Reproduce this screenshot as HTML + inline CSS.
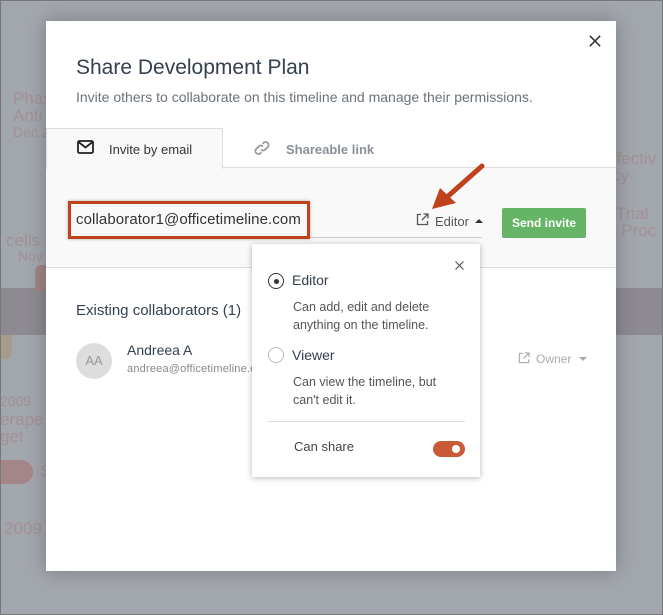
<!DOCTYPE html>
<html><head><style>
*{box-sizing:border-box;margin:0;padding:0}
body{width:663px;height:615px;position:relative;overflow:hidden;background:#a2a6ad;font-family:"Liberation Sans",sans-serif}
.a{position:absolute}
.bg{color:#a39194;font-size:17px;line-height:17px}
</style></head><body>
<div class="a" style="left:0;top:288px;width:663px;height:47px;background:#8d8a91"></div>
<div class="a" style="left:35px;top:265px;width:12px;height:26px;background:#a08487;border-radius:6px 0 0 0"></div>
<div class="a" style="left:0;top:335px;width:12px;height:24px;background:#a59c8d;border-radius:0 0 6px 0"></div>
<div class="a" style="left:0;top:460px;width:33px;height:24px;background:#a58688;border-radius:0 12px 12px 0"></div>
<div class="a bg" style="left:13px;top:90px">Phas<br>Anti</div>
<div class="a bg" style="left:13px;top:124px;font-size:14px">Dec 2</div>
<div class="a bg" style="left:6px;top:232px">cells</div>
<div class="a bg" style="left:18px;top:248px;font-size:14px">Nov</div>
<div class="a bg" style="left:0;top:393px;font-size:14px">2009</div>
<div class="a bg" style="left:0;top:411px">erape<br>get</div>
<div class="a bg" style="left:40px;top:462px">S</div>
<div class="a bg" style="left:4px;top:520px">2009</div>
<div class="a bg" style="left:612px;top:150px">ffectiv<br>cy</div>
<div class="a bg" style="left:616px;top:205px">Trial<br><span style="margin-left:-8px">y Proc</span></div>

<div class="a" style="left:46px;top:21px;width:570px;height:550px;background:#fff;box-shadow:0 0 18px rgba(0,0,0,.25)">
  <div class="a" style="left:30px;top:35px;font-size:21px;color:#344050">Share Development Plan</div>
  <div class="a" style="left:30px;top:68px;font-size:14px;color:#6b727b">Invite others to collaborate on this timeline and manage their permissions.</div>
  <svg class="a" style="left:543px;top:14px" width="12" height="12" viewBox="0 0 14 14"><path d="M1 1L13 13M13 1L1 13" stroke="#333" stroke-width="1.8"/></svg>
  <div class="a" style="left:0;top:146px;width:570px;height:101px;background:#f9f9f9;border-top:1px solid #ddd;border-bottom:1px solid #ddd"></div>
  <div class="a" style="left:0;top:107px;width:177px;height:41px;background:#f9f9f9;border:1px solid #ddd;border-bottom:none"></div>
  <svg class="a" style="left:31px;top:119px" width="17" height="14" viewBox="0 0 17 14"><rect x="1" y="1" width="15" height="12" rx="1.5" fill="none" stroke="#222" stroke-width="1.8"/><path d="M1.5 2L8.5 7.5L15.5 2" fill="none" stroke="#222" stroke-width="1.8"/></svg>
  <div class="a" style="left:63px;top:121px;font-size:13px;color:#333">Invite by email</div>
  <svg class="a" style="left:207px;top:118px" width="18" height="18" viewBox="0 0 18 18"><path d="M8 10.5a3 3 0 0 0 4 .3l3-3a3 3 0 0 0-4.2-4.2l-1.2 1.2M10 7.5a3 3 0 0 0-4-.3l-3 3a3 3 0 0 0 4.2 4.2l1.2-1.2" fill="none" stroke="#999" stroke-width="1.8"/></svg>
  <div class="a" style="left:240px;top:121px;font-size:13px;color:#8a9099;font-weight:bold">Shareable link</div>
  <div class="a" style="left:22px;top:216px;width:414px;height:1px;background:#ccc"></div>
  <div class="a" style="left:22px;top:180px;width:242px;height:38px;border:3px solid #c0421c;box-shadow:0 0 3px rgba(0,0,0,.3);background:#f9f9f9"></div>
  <div class="a" style="left:30px;top:190px;font-size:15px;color:#333;letter-spacing:.1px">collaborator1@officetimeline.com</div>
  <svg class="a" style="left:370px;top:192px" width="13" height="13" viewBox="0 0 13 13"><path d="M5 1.5H1.5v10h10V8M7.5 1h4.5v4.5M12 1L6 7" fill="none" stroke="#555" stroke-width="1.3"/></svg>
  <div class="a" style="left:389px;top:193px;font-size:13px;color:#555">Editor</div>
  <div class="a" style="left:429px;top:198px;width:0;height:0;border-left:4px solid transparent;border-right:4px solid transparent;border-bottom:4px solid #333"></div>
  <svg class="a" style="left:380px;top:142px" width="60" height="50" viewBox="0 0 60 50"><path d="M56 3L20 35" stroke="#c0421c" stroke-width="5" stroke-linecap="round"/><path d="M6 46L30 40L14 25Z" fill="#c0421c"/></svg>
  <div class="a" style="left:456px;top:187px;width:84px;height:30px;background:#66b466;border-radius:2px;color:#fff;font-size:12px;font-weight:bold;text-align:center;line-height:30px">Send invite</div>
  <div class="a" style="left:30px;top:281px;font-size:15px;color:#344050">Existing collaborators (1)</div>
  <div class="a" style="left:30px;top:322px;width:36px;height:36px;border-radius:50%;background:#ddd;color:#999;font-size:13px;text-align:center;line-height:36px">AA</div>
  <div class="a" style="left:81px;top:321px;font-size:14px;color:#344050">Andreea A</div>
  <div class="a" style="left:81px;top:342px;font-size:11px;color:#888;letter-spacing:.2px">andreea@officetimeline.com</div>
  <svg class="a" style="left:472px;top:331px" width="12" height="12" viewBox="0 0 13 13"><path d="M5 1.5H1.5v10h10V8M7.5 1h4.5v4.5M12 1L6 7" fill="none" stroke="#aaa" stroke-width="1.2"/></svg>
  <div class="a" style="left:490px;top:331px;font-size:12px;color:#aaa">Owner</div>
  <div class="a" style="left:533px;top:336px;width:0;height:0;border-left:4px solid transparent;border-right:4px solid transparent;border-top:4px solid #aaa"></div>
</div>

<div class="a" style="left:252px;top:244px;width:228px;height:233px;background:#fff;box-shadow:0 1px 6px rgba(0,0,0,.28)">
  <svg class="a" style="left:203px;top:17px" width="9" height="9" viewBox="0 0 9 9"><path d="M.5 .5L8.5 8.5M8.5 .5L.5 8.5" stroke="#555" stroke-width="1.2"/></svg>
  <div class="a" style="left:16px;top:29px;width:16px;height:16px;border:1.5px solid #333;border-radius:50%"></div>
  <div class="a" style="left:21.5px;top:34.5px;width:5px;height:5px;background:#333;border-radius:50%"></div>
  <div class="a" style="left:40px;top:28px;font-size:14px;color:#344050">Editor</div>
  <div class="a" style="left:41px;top:54px;font-size:12.5px;line-height:18px;color:#555">Can add, edit and delete<br>anything on the timeline.</div>
  <div class="a" style="left:16px;top:103px;width:16px;height:16px;border:1px solid #bbb;border-radius:50%"></div>
  <div class="a" style="left:40px;top:103px;font-size:14px;color:#344050">Viewer</div>
  <div class="a" style="left:41px;top:129px;font-size:12.5px;line-height:18px;color:#555">Can view the timeline, but<br>can't edit it.</div>
  <div class="a" style="left:16px;top:177px;width:197px;height:1px;background:#ddd"></div>
  <div class="a" style="left:42px;top:195px;font-size:13px;color:#444">Can share</div>
  <div class="a" style="left:181px;top:197px;width:32px;height:16px;background:#c95a38;border-radius:8px"></div>
  <div class="a" style="left:200px;top:201px;width:8px;height:8px;background:#fff;border-radius:50%"></div>
</div>
<div class="a" style="left:0;top:0;width:663px;height:615px;border:1px solid #777"></div>
</body></html>
